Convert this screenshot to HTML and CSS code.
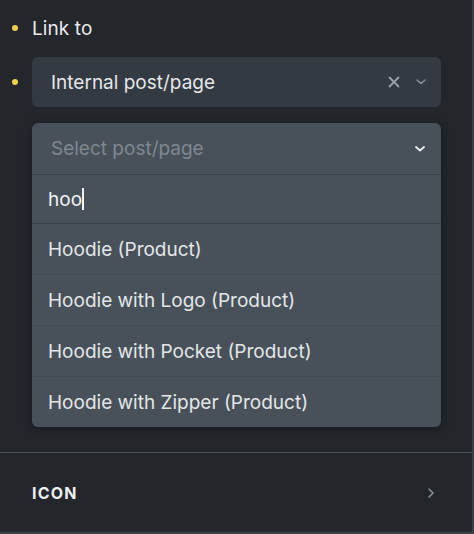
FILE: index.html
```html
<!DOCTYPE html>
<html>
<head>
<meta charset="utf-8">
<link rel="stylesheet" href="styles.css">
</head>
<body>
<div class="panel">
  <div class="controls">
    <div class="row label-row">
      <span class="dot"></span>
      <span class="label">Link to</span>
    </div>
    <div class="row">
      <span class="dot"></span>
      <div class="select">
        <span class="value">Internal post/page</span>
        <span class="icons">
          <svg class="clear" width="12" height="12" viewBox="0 0 12 12"><path d="M1.5 1.5 L10.5 10.5 M10.5 1.5 L1.5 10.5" stroke="#9aa1a8" stroke-width="1.8" stroke-linecap="round"/></svg>
          <svg class="chev" width="12" height="8" viewBox="0 0 12 8"><path d="M2 2 L6 5.5 L10 2" stroke="#8a9199" stroke-width="1.6" fill="none" stroke-linecap="round" stroke-linejoin="round"/></svg>
        </span>
      </div>
    </div>
    <div class="row">
      <span class="spacer"></span>
      <div class="dropdown">
        <div class="dd-head">
          <span class="placeholder">Select post/page</span>
          <svg width="12" height="8" viewBox="0 0 12 8"><path d="M2 2 L6 5.5 L10 2" stroke="#eef0f2" stroke-width="1.8" fill="none" stroke-linecap="round" stroke-linejoin="round"/></svg>
        </div>
        <div class="dd-search"><span>hoo</span><span class="caret"></span></div>
        <div class="dd-option">Hoodie (Product)</div>
        <div class="dd-option">Hoodie with Logo (Product)</div>
        <div class="dd-option">Hoodie with Pocket (Product)</div>
        <div class="dd-option last">Hoodie with Zipper (Product)</div>
      </div>
    </div>
  </div>
  <div class="section">
    <span class="section-title">ICON</span>
    <svg width="8" height="12" viewBox="0 0 8 12"><path d="M2 2 L6 6 L2 10" stroke="#8a9199" stroke-width="1.6" fill="none" stroke-linecap="round" stroke-linejoin="round"/></svg>
  </div>
</div>
</body>
</html>
```

FILE: styles.css
```css
html, body {
  margin: 0;
  padding: 0;
  background: #23262b;
}
body {
  font-family: Inter, "Noto Sans", sans-serif;
  color: #e6e8ea;
  width: 474px;
  height: 534px;
  overflow: hidden;
}
.panel {
  width: 472px;
  height: 532px;
  border-right: 2px solid #3a4047;
  border-bottom: 2px solid #3a4047;
  display: flex;
  flex-direction: column;
}
.controls {
  display: flex;
  flex-direction: column;
  padding-top: 11px;
  height: 453px;
  flex: none;
  box-sizing: border-box;
  border-bottom: 1px solid #474d55;
}
.row {
  display: flex;
  align-items: center;
}
.label-row {
  height: 34px;
  margin-bottom: 12px;
}
.dot, .spacer {
  width: 32px;
  display: flex;
  justify-content: center;
  flex: none;
}
.dot::before {
  content: "";
  width: 6px;
  height: 6px;
  border-radius: 50%;
  background: #f2cf4a;
  margin-left: -2px;
}
.label {
  font-size: 19px;
  letter-spacing: 0.1px;
  color: #e9ebed;
}
.select {
  width: 409px;
  height: 50px;
  background: #343a42;
  border-radius: 6px;
  display: flex;
  align-items: center;
  justify-content: space-between;
  padding: 0 14px 0 19px;
  box-sizing: border-box;
  font-size: 19px;
  color: #e4e6e9;
}
.icons {
  display: flex;
  align-items: center;
  gap: 15px;
}
.dropdown {
  margin-top: 16px;
  width: 409px;
  background: #48515a;
  border-radius: 6px;
  box-shadow: 0 2px 8px rgba(0,0,0,0.35);
  overflow: hidden;
  font-size: 19px;
}
.dd-head {
  height: 51px;
  display: flex;
  align-items: center;
  justify-content: space-between;
  padding: 0 15px 0 19px;
  border-bottom: 1px solid #3a4149;
}
.placeholder {
  color: #7f8891;
}
.dd-search {
  height: 48px;
  display: flex;
  align-items: center;
  padding-left: 16px;
  border-bottom: 1px solid #3a4149;
  color: #f2f3f5;
}
.caret {
  width: 1.5px;
  height: 22px;
  background: #f2f3f5;
}
.dd-option {
  height: 50px;
  display: flex;
  align-items: center;
  padding-left: 16px;
  border-bottom: 1px solid #414951;
  color: #e3e6e8;
}
.dd-option.last {
  border-bottom: none;
}
.section {
  flex: 1;
  display: flex;
  align-items: center;
  justify-content: space-between;
  padding: 0 37px 0 32px;
}
.section-title {
  font-size: 16px;
  font-weight: 700;
  letter-spacing: 1.2px;
  color: #eceef0;
}
```
